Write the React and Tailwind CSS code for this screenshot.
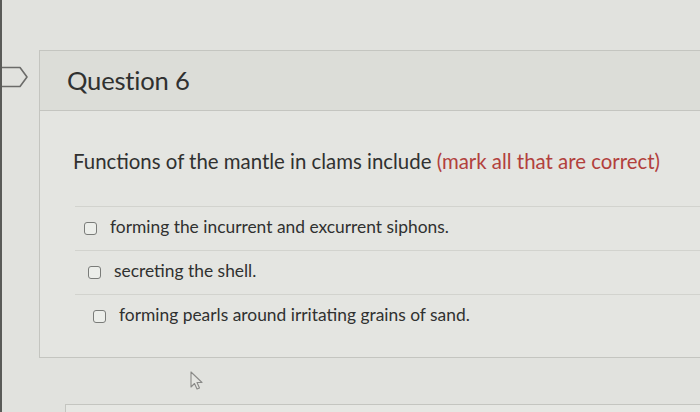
import React from 'react';

const options = [
  { text: 'forming the incurrent and excurrent siphons.', indent: 'pl-[9px]' },
  { text: 'secreting the shell.', indent: 'pl-[13px]' },
  { text: 'forming pearls around irritating grains of sand.', indent: 'pl-[18px]' },
];

const TagIcon = () => (
  <svg width="28" height="22" viewBox="0 0 28 22" className="block">
    <path d="M1 1.5 H19 L26 11 L19 20.5 H1" fill="none" stroke="#6b6b69" strokeWidth="1.6" strokeLinejoin="round" />
  </svg>
);

const Pointer = () => (
  <svg width="16" height="20" viewBox="0 0 16 20" className="block">
    <path d="M2 1 L2 16 L5.5 12.5 L8 18 L10.5 17 L8 11.5 L13 11.5 Z" fill="#e4e5e1" stroke="#8a8a88" strokeWidth="1.1" strokeLinejoin="round" />
  </svg>
);

const Checkbox = () => (
  <span className="inline-block w-[13px] h-[13px] rounded-[3px] border-[1.5px] border-[#7a7c79] bg-[#eceeea] shrink-0" />
);

export default function App() {
  return (
    <div
      className="w-[700px] h-[412px] overflow-hidden bg-[#e1e2de] border-l-2 border-[#5a5b58] text-[#303130]"
      style={{ fontFamily: 'Lato, "Open Sans", sans-serif' }}
    >
      <div className="flex pt-[50px]">
        <div className="w-[38px] shrink-0 pt-[16px] -ml-[1px]">
          <TagIcon />
        </div>
        <div className="flex-1 flex flex-col">
          <div className="border border-r-0 border-[#c4c5c0] bg-[#e4e5e1]">
            <div className="h-[60px] flex items-center pl-[27px] bg-[#dcddd8] border-b border-[#c4c5c0]">
              <h2 className="text-[25.6px] leading-none tracking-[-0.2px]">Question 6</h2>
            </div>
            <div className="pl-[33px] pt-[36px] pb-[19px]">
              <p className="text-[20.4px] leading-[28px]">
                Functions of the mantle in clams include{' '}
                <span className="text-[#b2403c]">(mark all that are correct)</span>
              </p>
              <div className="mt-[31px] ml-[2px]">
                {options.map((o, i) => (
                  <div
                    key={i}
                    className={`h-[44px] flex items-center gap-[13px] border-t border-[#d2d3ce] ${o.indent}`}
                  >
                    <Checkbox />
                    <span className="text-[17.4px] leading-none -mt-[4px]">{o.text}</span>
                  </div>
                ))}
              </div>
            </div>
          </div>
          <div className="pl-[150px] pt-[13px] h-[46px]">
            <Pointer />
          </div>
          <div className="ml-[26px] h-[20px] border border-r-0 border-[#c4c5c0] bg-[#e6e7e3]" />
        </div>
      </div>
    </div>
  );
}
